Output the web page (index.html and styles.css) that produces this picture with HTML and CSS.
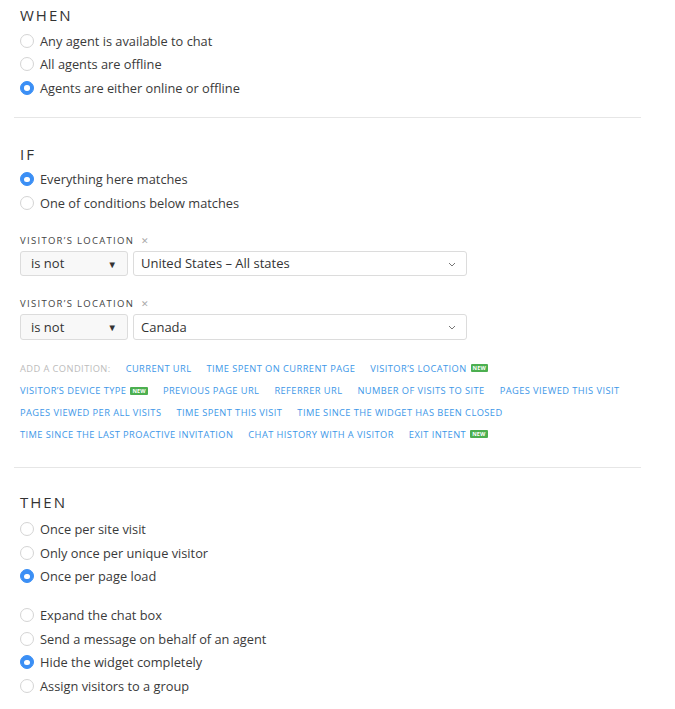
FILE: index.html
```html
<!DOCTYPE html>
<html>
<head>
<meta charset="utf-8">
<link rel="stylesheet" href="styles.css">
</head>
<body>
<div class="page">
  <section class="section when">
    <h2 class="heading">WHEN</h2>
    <ul class="radios">
      <li class="radio"><span class="dot"></span>Any agent is available to chat</li>
      <li class="radio"><span class="dot"></span>All agents are offline</li>
      <li class="radio"><span class="dot on"></span>Agents are either online or offline</li>
    </ul>
  </section>
  <section class="section if">
    <h2 class="heading">IF</h2>
    <ul class="radios">
      <li class="radio"><span class="dot on"></span>Everything here matches</li>
      <li class="radio"><span class="dot"></span>One of conditions below matches</li>
    </ul>
    <div class="cond">
      <div class="cond-label">VISITOR’S LOCATION <span class="x">✕</span></div>
      <div class="cond-row">
        <div class="sel op">is not<span class="tri">▼</span></div>
        <div class="sel val">United States – All states
          <svg class="chev" width="8" height="5" viewBox="0 0 8 5"><path d="M1 1 L4 4 L7 1" fill="none" stroke="#777" stroke-width="1"/></svg>
        </div>
      </div>
    </div>
    <div class="cond">
      <div class="cond-label">VISITOR’S LOCATION <span class="x">✕</span></div>
      <div class="cond-row">
        <div class="sel op">is not<span class="tri">▼</span></div>
        <div class="sel val">Canada
          <svg class="chev" width="8" height="5" viewBox="0 0 8 5"><path d="M1 1 L4 4 L7 1" fill="none" stroke="#777" stroke-width="1"/></svg>
        </div>
      </div>
    </div>
    <div class="add">
      <div class="add-row">
        <span class="add-title">ADD A CONDITION:</span>
        <a class="link">CURRENT URL</a>
        <a class="link">TIME SPENT ON CURRENT PAGE</a>
        <a class="link">VISITOR’S LOCATION<span class="new">NEW</span></a>
      </div>
      <div class="add-row">
        <a class="link">VISITOR’S DEVICE TYPE<span class="new">NEW</span></a>
        <a class="link">PREVIOUS PAGE URL</a>
        <a class="link">REFERRER URL</a>
        <a class="link">NUMBER OF VISITS TO SITE</a>
        <a class="link">PAGES VIEWED THIS VISIT</a>
      </div>
      <div class="add-row">
        <a class="link">PAGES VIEWED PER ALL VISITS</a>
        <a class="link">TIME SPENT THIS VISIT</a>
        <a class="link">TIME SINCE THE WIDGET HAS BEEN CLOSED</a>
      </div>
      <div class="add-row">
        <a class="link">TIME SINCE THE LAST PROACTIVE INVITATION</a>
        <a class="link">CHAT HISTORY WITH A VISITOR</a>
        <a class="link">EXIT INTENT<span class="new">NEW</span></a>
      </div>
    </div>
  </section>
  <section class="section then">
    <h2 class="heading">THEN</h2>
    <ul class="radios">
      <li class="radio"><span class="dot"></span>Once per site visit</li>
      <li class="radio"><span class="dot"></span>Only once per unique visitor</li>
      <li class="radio"><span class="dot on"></span>Once per page load</li>
    </ul>
    <ul class="radios group2">
      <li class="radio"><span class="dot"></span>Expand the chat box</li>
      <li class="radio"><span class="dot"></span>Send a message on behalf of an agent</li>
      <li class="radio"><span class="dot on"></span>Hide the widget completely</li>
      <li class="radio"><span class="dot"></span>Assign visitors to a group</li>
    </ul>
  </section>
</div>
</body>
</html>
```

FILE: styles.css
```css
* { box-sizing: border-box; }
html, body { margin: 0; padding: 0; background: #fff; }
body {
  font-family: "Open Sans", "Noto Sans", sans-serif;
  color: #3a3a3a;
  font-size: 13px;
}
.page { width: 627px; margin-left: 14px; }
.section { padding-left: 6px; }
.section + .section { border-top: 1px solid #e6e6e6; }
.when { padding-top: 5px; padding-bottom: 17px; }
.if { padding-top: 26px; padding-bottom: 22px; }
.then { padding-top: 24px; }
.heading {
  margin: 0 0 4px;
  font-size: 15px;
  line-height: 20px;
  font-weight: 400;
  letter-spacing: 2px;
  color: #333;
}
.then .heading { margin-bottom: 6px; }
.radios { list-style: none; margin: 0; padding: 0; }
.radio {
  display: flex;
  align-items: center;
  height: 23.5px;
  font-size: 12.8px;
  color: #3a3a3a;
}
.dot {
  width: 14px; height: 14px;
  border-radius: 50%;
  border: 1px solid #d4d4d4;
  background: #fff;
  margin-right: 6px;
  flex: none;
  display: flex; align-items: center; justify-content: center;
}
.dot.on { background: #3b8ff5; border-color: #3b8ff5; }
.dot.on::after {
  content: "";
  width: 5.5px; height: 5.5px; border-radius: 50%; background: #fff;
}
.group2 { margin-top: 15.5px; }
.cond { margin-top: 19px; }
.cond + .cond { margin-top: 21px; }
.cond-label {
  font-size: 9.5px;
  line-height: 14px;
  letter-spacing: 1.3px;
  color: #444;
  margin-bottom: 3px;
}
.x { color: #aaa; font-size: 9px; margin-left: 3px; }
.cond-row { display: flex; gap: 5px; }
.sel {
  height: 25.5px;
  border: 1px solid #dcdcdc;
  border-radius: 3px;
  display: flex; align-items: center;
  font-size: 13px;
  color: #333;
  position: relative;
}
.op { width: 108px; background: #f8f8f8; padding-left: 10px; }
.tri { font-size: 9.5px; color: #333; position: absolute; right: 10px; top: 6px; }
.val { width: 334px; padding-left: 7px; background: #fff; }
.chev { position: absolute; right: 10px; top: 10px; }
.add { margin-top: 17px; }
.add-row {
  display: flex;
  align-items: center;
  gap: 15px;
  height: 22px;
  font-size: 9.3px;
  letter-spacing: 0.42px;
}
.add-row:first-child { height: 23px; }
.add-row:last-child { height: 21px; }
.add-title { color: #bcbcbc; }
.link { color: #3d97e8; display: inline-flex; align-items: center; }
.new {
  display: inline-block;
  background: #4caf50;
  color: #fff;
  font-size: 5.5px;
  font-weight: 700;
  line-height: 8px;
  padding: 0 2px;
  border-radius: 1px;
  margin-left: 4px;
  letter-spacing: 0.2px;
}
```
